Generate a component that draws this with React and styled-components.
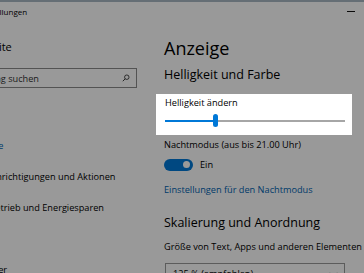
import React from "react";
import styled, { createGlobalStyle } from "styled-components";

const GlobalStyle = createGlobalStyle`
  html, body {
    margin: 0;
    padding: 0;
    overflow: hidden;
    background: #ffffff;
  }
  body {
    font-family: "Segoe UI", "Open Sans", "Noto Sans", sans-serif;
    color: #000000;
  }
`;

const navItems = [
  { label: "Anzeige", active: true },
  { label: "Benachrichtigungen und Aktionen" },
  { label: "Netzbetrieb und Energiesparen" },
  { label: "Akku" },
  { label: "Speicher" },
];

export default function App() {
  return (
    <>
      <GlobalStyle />
      <Window>
        <TopEdge />
        <TitleBar>
          <Title>Einstellungen</Title>
          <Minimize />
        </TitleBar>
        <Body>
          <LeftPane>
            <Home>Startseite</Home>
            <Search>
              <SearchText>Einstellung suchen</SearchText>
              <SearchIcon viewBox="0 0 10 10">
                <circle cx="6" cy="4" r="2.8" fill="none" stroke="#222" strokeWidth="1" />
                <line x1="4" y1="6" x2="1" y2="9" stroke="#222" strokeWidth="1.1" />
              </SearchIcon>
            </Search>
            <Category>System</Category>
            {navItems.map((item) => (
              <NavItem key={item.label} $active={item.active}>
                {item.label}
              </NavItem>
            ))}
          </LeftPane>
          <Content>
            <PageTitle>Anzeige</PageTitle>
            <SectionTitle>Helligkeit und Farbe</SectionTitle>
            <Spotlight>
              <Label>Helligkeit ändern</Label>
              <Slider>
                <Track>
                  <Fill style={{ width: "28%" }} />
                </Track>
                <Thumb style={{ left: "28%" }} />
              </Slider>
            </Spotlight>
            <NightLabel>Nachtmodus (aus bis 21.00 Uhr)</NightLabel>
            <ToggleRow>
              <Toggle $on>
                <Knob />
              </Toggle>
              <ToggleText>Ein</ToggleText>
            </ToggleRow>
            <Link>Einstellungen für den Nachtmodus</Link>
            <SectionTitle $gap={17}>Skalierung und Anordnung</SectionTitle>
            <Label $gap={8}>Größe von Text, Apps und anderen Elementen ändern</Label>
            <Select>
              <span>125 % (empfohlen)</span>
              <Chevron viewBox="0 0 10 6">
                <polyline points="1,1 5,5 9,1" fill="none" stroke="#222" strokeWidth="1" />
              </Chevron>
            </Select>
          </Content>
        </Body>
        <Dim />
      </Window>
    </>
  );
}

const Window = styled.div`
  position: relative;
  z-index: 0;
  width: 364px;
  height: 273px;
  overflow: hidden;
  background: #ffffff;
`;

const Dim = styled.div`
  position: absolute;
  inset: 0;
  z-index: 1;
  background: rgba(0, 0, 0, 0.4);
  pointer-events: none;
`;

const TopEdge = styled.div`
  height: 2px;
  background: #a9b7c4;
`;

const TitleBar = styled.div`
  height: 18px;
  display: flex;
  align-items: center;
  justify-content: space-between;
  padding-right: 9px;
`;

const Title = styled.span`
  font-size: 8px;
  margin-left: -23px;
  color: #000;
`;

const Minimize = styled.span`
  width: 8px;
  height: 1px;
  background: #111;
`;

const Body = styled.div`
  display: flex;
`;

const LeftPane = styled.nav`
  width: 206px;
  margin-left: -50px;
  flex-shrink: 0;
  display: flex;
  flex-direction: column;
`;

const Home = styled.div`
  margin-top: 19px;
  padding-left: 13px;
  font-size: 11px;
  line-height: 16px;
`;

const Search = styled.div`
  margin-top: 13px;
  width: 187px;
  height: 20px;
  box-sizing: border-box;
  border: 1px solid #8a8a8a;
  display: flex;
  align-items: center;
  justify-content: space-between;
  padding: 0 6px 0 8px;
`;

const SearchText = styled.span`
  font-size: 9.2px;
  color: #333;
`;

const SearchIcon = styled.svg`
  width: 8px;
  height: 8px;
`;

const Category = styled.div`
  margin-top: 18px;
  padding-left: 12px;
  font-size: 9.2px;
  font-weight: 600;
  line-height: 24px;
`;

const NavItem = styled.div`
  height: 31px;
  display: flex;
  align-items: center;
  padding-left: 20px;
  font-size: 9.2px;
  white-space: nowrap;
  color: ${(p) => (p.$active ? "#0063b1" : "#000")};
`;

const Content = styled.main`
  flex: 1;
  display: flex;
  flex-direction: column;
  padding-left: 8px;
`;

const PageTitle = styled.h1`
  margin: 16px 0 0;
  font-size: 18px;
  font-weight: 400;
  line-height: 24px;
`;

const SectionTitle = styled.h2`
  margin: ${(p) => p.$gap || 6}px 0 0;
  font-size: 12.5px;
  font-weight: 400;
  line-height: 18px;
`;

const Spotlight = styled.section`
  position: relative;
  z-index: 2;
  margin: 10px 0 0 -8px;
  width: 196px;
  height: 41px;
  box-sizing: border-box;
  padding: 2px 7px 0 9px;
  background: #ffffff;
`;

const Label = styled.div`
  margin-top: ${(p) => p.$gap || 0}px;
  font-size: 9.2px;
  line-height: 14px;
  white-space: nowrap;
`;

const Slider = styled.div`
  position: relative;
  margin-top: 4px;
  height: 14px;
  display: flex;
  align-items: center;
`;

const Track = styled.div`
  width: 100%;
  height: 2px;
  background: #a6a6a6;
`;

const Fill = styled.div`
  height: 100%;
  background: #0078d7;
`;

const Thumb = styled.div`
  position: absolute;
  top: 0;
  width: 5px;
  height: 13px;
  margin-left: -2px;
  border-radius: 3px;
  background: #0078d7;
`;

const NightLabel = styled(Label)`
  margin-top: 2.5px;
`;

const ToggleRow = styled.div`
  margin-top: 6px;
  display: flex;
  align-items: center;
  gap: 7px;
  height: 14px;
`;

const Toggle = styled.div`
  width: 29px;
  height: 12px;
  box-sizing: border-box;
  border-radius: 6px;
  background: ${(p) => (p.$on ? "#0078d7" : "#fff")};
  display: flex;
  align-items: center;
  justify-content: ${(p) => (p.$on ? "flex-end" : "flex-start")};
  padding: 0 3px;
`;

const Knob = styled.span`
  width: 7px;
  height: 7px;
  border-radius: 50%;
  background: #ffffff;
`;

const ToggleText = styled.span`
  font-size: 9.2px;
`;

const Link = styled.a`
  margin-top: 11px;
  font-size: 9.2px;
  line-height: 14px;
  color: #0063b1;
`;

const Select = styled.div`
  margin-top: 9px;
  margin-left: 1px;
  width: 180px;
  height: 26px;
  box-sizing: border-box;
  border: 1px solid #9a9a9a;
  display: flex;
  align-items: flex-start;
  justify-content: space-between;
  padding: 3px 6px 0 7px;
  font-size: 9.2px;
  line-height: 14px;
`;

const Chevron = styled.svg`
  width: 9px;
  height: 5px;
  margin-top: 5px;
`;
